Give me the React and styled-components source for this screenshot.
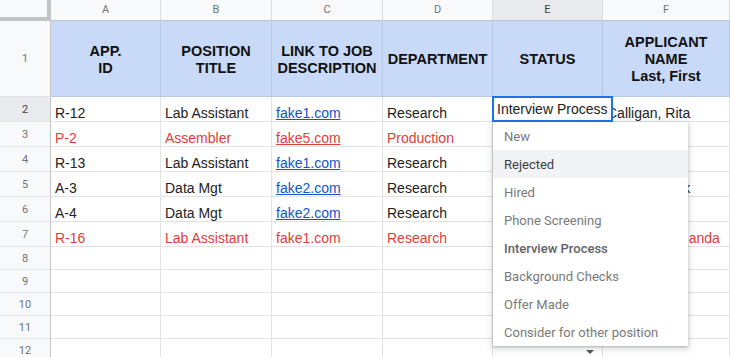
import React from 'react'
import styled, { createGlobalStyle } from 'styled-components'

const GlobalStyle = createGlobalStyle`
  html, body {
    margin: 0;
    padding: 0;
    background: #fff;
    overflow: hidden;
  }
  * {
    box-sizing: border-box;
  }
`

const COLS = '51px 110px 111px 111px 110px 110px 1fr'
const RED = '#e0403a'
const BLUE = '#1155cc'

const Sheet = styled.div`
  position: relative;
  width: 730px;
  height: 357px;
  overflow: hidden;
  font-family: 'Liberation Sans', Arial, sans-serif;
`

const Row = styled.div`
  display: grid;
  grid-template-columns: ${COLS};
  height: ${(p) => p.h}px;
`

const Corner = styled.div`
  background: #f8f9fa;
  border-right: 4px solid #c4c4c4;
  border-bottom: 4px solid #c4c4c4;
`

const ColHead = styled.div`
  display: flex;
  align-items: center;
  justify-content: center;
  padding-bottom: 1px;
  background: ${(p) => (p.active ? '#e8eaed' : '#f8f9fa')};
  border-right: 1px solid #dadce0;
  border-bottom: 1px solid #c4c4c4;
  font-family: Roboto, 'Liberation Sans', sans-serif;
  font-size: 11px;
  color: ${(p) => (p.active ? '#3c4043' : '#6f7377')};
`

const RowHead = styled.div`
  display: flex;
  align-items: center;
  justify-content: center;
  background: ${(p) => (p.active ? '#e8eaed' : '#f8f9fa')};
  border-right: 1px solid #c4c4c4;
  border-bottom: 1px solid #e2e3e3;
  font-family: Roboto, 'Liberation Sans', sans-serif;
  font-size: 11px;
  color: ${(p) => (p.active ? '#3c4043' : '#6f7377')};
`

const TitleCell = styled.div`
  display: flex;
  align-items: center;
  justify-content: center;
  text-align: center;
  padding-top: 2px;
  background: #c9daf8;
  border-right: 1px solid #b8c8e4;
  border-bottom: 1px solid #b8c8e4;
  font-weight: bold;
  font-size: 14.5px;
  line-height: 17px;
  color: #111;
`

const Cell = styled.div`
  display: flex;
  align-items: flex-end;
  justify-content: ${(p) => (p.end ? 'flex-end' : 'flex-start')};
  padding: 0 ${(p) => (p.end ? 8 : 4)}px 0 4px;
  border-right: 1px solid #e2e3e3;
  border-bottom: 1px solid #e2e3e3;
  font-size: 14px;
  line-height: 15px;
  white-space: nowrap;
  color: ${(p) => p.color || '#222'};
`

const Link = styled.span`
  color: ${(p) => p.color || BLUE};
  text-decoration: underline;
`

const DropArrow = styled.span`
  align-self: center;
  margin-bottom: -3px;
  width: 0;
  height: 0;
  border-left: 4px solid transparent;
  border-right: 4px solid transparent;
  border-top: 4px solid #555;
`

const Editor = styled.div`
  position: absolute;
  left: 492px;
  top: 96px;
  width: 121px;
  height: 26px;
  display: flex;
  align-items: center;
  padding: 0 3px;
  background: #fff;
  border: 2px solid #1a73e8;
  font-size: 14px;
  color: #222;
  white-space: nowrap;
`

const Caret = styled.span`
  display: inline-block;
  width: 1px;
  height: 17px;
  background: #000;
  margin-left: 1px;
`

const Menu = styled.div`
  position: absolute;
  left: 493px;
  top: 122px;
  width: 195px;
  background: #fff;
  box-shadow: 0 1px 2px rgba(60, 64, 67, 0.3), 0 2px 6px 2px rgba(60, 64, 67, 0.15);
  font-family: Roboto, 'Liberation Sans', sans-serif;
  font-size: 13px;
`

const Option = styled.div`
  height: 28px;
  display: flex;
  align-items: center;
  padding-left: 11px;
  background: ${(p) => (p.hover ? '#f1f3f4' : 'transparent')};
  color: ${(p) => (p.hover ? '#3c4043' : p.selected ? '#5f6368' : '#7a7a7a')};
  font-weight: ${(p) => (p.selected ? 500 : 400)};
`

const titles = [
  ['APP.', 'ID'],
  ['POSITION', 'TITLE'],
  ['LINK TO JOB', 'DESCRIPTION'],
  ['DEPARTMENT'],
  ['STATUS'],
  ['APPLICANT', 'NAME', 'Last, First'],
]

// status values of rows 3-7 sit under the open menu, so they are left out
const rows = [
  { n: 2, id: 'R-12', title: 'Lab Assistant', link: 'fake1.com', dept: 'Research', name: 'Calligan, Rita' },
  { n: 3, red: true, id: 'P-2', title: 'Assembler', link: 'fake5.com', dept: 'Production', name: '' },
  { n: 4, id: 'R-13', title: 'Lab Assistant', link: 'fake1.com', dept: 'Research', name: '' },
  { n: 5, id: 'A-3', title: 'Data Mgt', link: 'fake2.com', dept: 'Research', name: 'Brown, Frank' },
  { n: 6, id: 'A-4', title: 'Data Mgt', link: 'fake2.com', dept: 'Research', name: '' },
  { n: 7, red: true, plainLink: true, id: 'R-16', title: 'Lab Assistant', link: 'fake1.com', dept: 'Research', name: 'Martinez, Amanda' },
]

const options = [
  'New',
  'Rejected',
  'Hired',
  'Phone Screening',
  'Interview Process',
  'Background Checks',
  'Offer Made',
  'Consider for other position',
]

export default function App() {
  return (
    <Sheet>
      <GlobalStyle />
      <Row h={21}>
        <Corner />
        {['A', 'B', 'C', 'D', 'E', 'F'].map((c) => (
          <ColHead key={c} active={c === 'E'}>
            {c}
          </ColHead>
        ))}
      </Row>
      <Row h={76}>
        <RowHead>1</RowHead>
        {titles.map((lines, i) => (
          <TitleCell key={i}>
            <div>
              {lines.map((l) => (
                <div key={l}>{l}</div>
              ))}
            </div>
          </TitleCell>
        ))}
      </Row>
      {rows.map((r) => {
        const color = r.red ? RED : undefined
        return (
          <Row h={25} key={r.n}>
            <RowHead active={r.n === 2}>{r.n}</RowHead>
            <Cell color={color}>{r.id}</Cell>
            <Cell color={color}>{r.title}</Cell>
            <Cell color={color}>
              {r.plainLink ? r.link : <Link color={color}>{r.link}</Link>}
            </Cell>
            <Cell color={color}>{r.dept}</Cell>
            <Cell color={color} />
            <Cell color={color}>{r.name}</Cell>
          </Row>
        )
      })}
      {[8, 9, 10, 11, 12].map((n) => (
        <Row h={23} key={n}>
          <RowHead>{n}</RowHead>
          <Cell />
          <Cell />
          <Cell />
          <Cell />
          <Cell end={n === 12}>{n === 12 && <DropArrow />}</Cell>
          <Cell />
        </Row>
      ))}
      <Editor>
        Interview Process
        <Caret />
      </Editor>
      <Menu>
        {options.map((o) => (
          <Option key={o} hover={o === 'Rejected'} selected={o === 'Interview Process'}>
            {o}
          </Option>
        ))}
      </Menu>
    </Sheet>
  )
}
